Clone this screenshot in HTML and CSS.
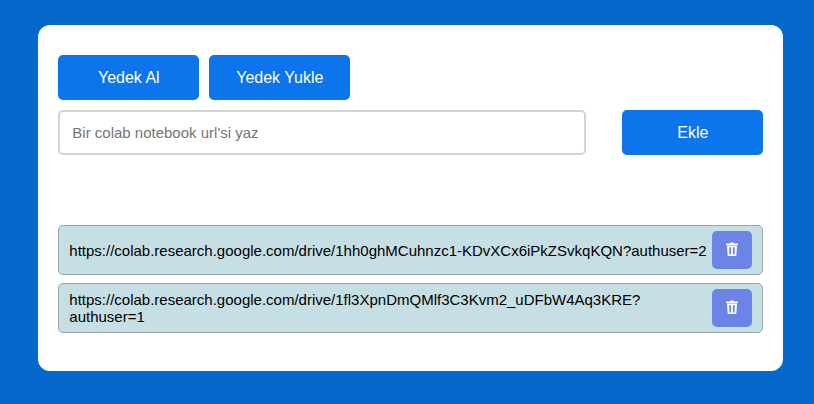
FILE: index.html
```html
<html>

<head>
<meta charset="utf-8">
<title>Colab</title>
<link rel="stylesheet" href="styles.css">
</head>

<body>

<div class="card">
	<div class="actions">
		<button type="button" class="btn">Yedek Al</button>
		<button type="button" class="btn">Yedek Yukle</button>
	</div>

	<div class="add-row">
		<input class="url-input" type="text" placeholder="Bir colab notebook url'si yaz" spellcheck="false">
		<button type="button" class="btn">Ekle</button>
	</div>

	<div class="list">
		<div class="item">
			<div class="item-url">https://colab.research.google.com/drive/1hh0ghMCuhnzc1-KDvXCx6iPkZSvkqKQN?authuser=2</div>
			<button type="button" class="delete" aria-label="Sil">
				<svg class="trash" viewBox="0 0 12 14" width="12" height="14">
					<path d="M0 1.6H4L4.5 0.4H7.5L8 1.6H12V3H0Z" fill="#fff"/>
					<path fill-rule="evenodd" d="M1 3.6H11L10.4 13.2Q10.3 14 9.5 14H2.5Q1.7 14 1.6 13.2ZM3.2 5.2L3.5 12.6H5.1V5.2ZM6.9 5.2V12.6H8.5L8.8 5.2Z" fill="#fff"/>
				</svg>
			</button>
		</div>
		<div class="item">
			<div class="item-url">https://colab.research.google.com/drive/1fl3XpnDmQMlf3C3Kvm2_uDFbW4Aq3KRE?authuser=1</div>
			<button type="button" class="delete" aria-label="Sil">
				<svg class="trash" viewBox="0 0 12 14" width="12" height="14">
					<path d="M0 1.6H4L4.5 0.4H7.5L8 1.6H12V3H0Z" fill="#fff"/>
					<path fill-rule="evenodd" d="M1 3.6H11L10.4 13.2Q10.3 14 9.5 14H2.5Q1.7 14 1.6 13.2ZM3.2 5.2L3.5 12.6H5.1V5.2ZM6.9 5.2V12.6H8.5L8.8 5.2Z" fill="#fff"/>
				</svg>
			</button>
		</div>
	</div>
</div>

</body>

</html>
```

FILE: styles.css
```css
body {
	margin: 0;
	padding: 25px 30px 33px 38.3px;
	background-color: #0569cc;
	font-family: "Liberation Sans", Arial, sans-serif;
	font-size: 15px;
	overflow: hidden;
}

.card {
	box-sizing: border-box;
	width: 745px;
	height: 346px;
	padding: 30px 20px;
	background-color: #fff;
	border-radius: 12px;
}

.actions {
	display: flex;
	gap: 10px;
}

.btn {
	width: 141px;
	height: 45px;
	padding: 0;
	border: none;
	border-radius: 5px;
	background-color: #0d75ec;
	color: #fff;
	font-family: inherit;
	font-size: 16px;
}

.add-row {
	display: flex;
	justify-content: space-between;
	margin-top: 10px;
}

.url-input {
	box-sizing: border-box;
	width: 528px;
	height: 45px;
	padding: 0 12px;
	border: 2px solid #d3d3d3;
	border-radius: 5px;
	outline: none;
	font-family: inherit;
	font-size: 15px;
}

.url-input::placeholder {
	color: #757575;
}

.list {
	display: flex;
	flex-direction: column;
	gap: 8px;
	margin-top: 70px;
}

.item {
	box-sizing: border-box;
	display: flex;
	align-items: center;
	justify-content: space-between;
	height: 50px;
	padding: 0 10px;
	background-color: #c6dfe4;
	border: 1px solid #9aa5a8;
	border-radius: 5px;
	color: #000;
	line-height: 17px;
}

.item-url {
	width: 638px;
}

.delete {
	display: flex;
	align-items: center;
	justify-content: center;
	flex: none;
	width: 40px;
	height: 38px;
	padding: 0;
	border: none;
	border-radius: 5px;
	background-color: #6c83e8;
}

.trash {
	margin-bottom: 2px;
}
```
